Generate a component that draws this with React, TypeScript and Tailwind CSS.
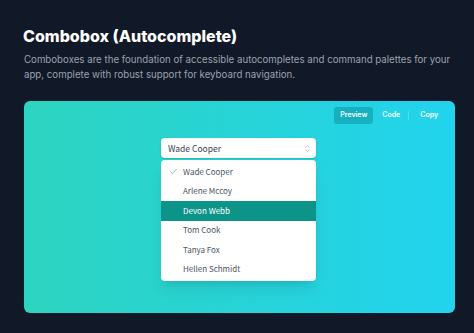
import { Check, ChevronsUpDown } from 'lucide-react'

const people = ['Wade Cooper', 'Arlene Mccoy', 'Devon Webb', 'Tom Cook', 'Tanya Fox', 'Hellen Schmidt']

export default function App() {
  return (
    <div className="w-[474px] h-[333px] bg-[#111827] px-6 pt-[25px] overflow-hidden" style={{ fontFamily: 'Inter, "Noto Sans", sans-serif' }}>
      <h1 className="text-[16px] leading-[22px] font-extrabold text-white -ml-px">Combobox (Autocomplete)</h1>
      <p className="mt-[5px] -mr-3 text-[9.7px] leading-[15px] text-[#9ca3af]">
        Comboboxes are the foundation of accessible autocompletes and command palettes for your app, complete with robust support for keyboard navigation.
      </p>

      <div className="mt-[19px] h-[212px] w-[431px] rounded-[6px] bg-gradient-to-r from-[#2dd4bf] to-[#22d3ee] relative">
        <div className="absolute right-[17px] top-[6px] flex items-center text-[7px] font-semibold text-white">
          <span className="h-[17px] px-[6px] flex items-center rounded-[3px] bg-[#0e9aa8]/60">Preview</span>
          <span className="ml-[9px]">Code</span>
          <span className="ml-[8px] w-px h-[9px] bg-white/20" />
          <span className="ml-[11px]">Copy</span>
        </div>

        <div className="absolute left-[137px] top-[37px] w-[155px]" style={{ fontFamily: '"Noto Sans CJK KR", "Noto Sans", sans-serif' }}>
          <div className="h-[20px] rounded-[4px] bg-white shadow-sm flex items-center pl-[7px] pr-[4px] text-[8.5px] text-[#374151]">
            <span className="flex-1">Wade Cooper</span>
            <ChevronsUpDown size={9} className="text-[#9ca3af]" strokeWidth={1.5} />
          </div>
          <ul className="mt-[2px] rounded-[4px] bg-white shadow-lg py-[2px] text-[8px] text-[#4b5563]">
            {people.map((p, i) => (
              <li
                key={p}
                className={`relative h-[19.5px] flex items-center pl-[22px] ${i === 2 ? 'bg-[#0d9488] text-white' : ''}`}
              >
                {i === 0 && <Check size={9} strokeWidth={1.4} className="absolute left-[8px] text-[#0d9488]" />}
                <span>{p}</span>
              </li>
            ))}
          </ul>
        </div>
      </div>
    </div>
  )
}
